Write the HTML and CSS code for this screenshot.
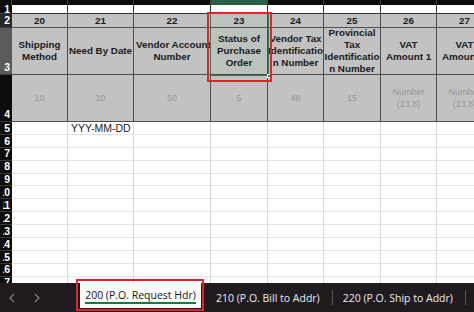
FILE: index.html
```html
<!DOCTYPE html>
<html>
<head>
<meta charset="utf-8">
<link rel="stylesheet" href="styles.css">
</head>
<body>
<div class="app">
  <div class="sheet">
    <!-- column letter strip (cut off) -->
    <div class="c top"></div>
    <div class="c top"></div><div class="c top"></div><div class="c top"></div>
    <div class="c top top-sel"></div>
    <div class="c top"></div><div class="c top"></div><div class="c top"></div><div class="c top"></div>

    <!-- row 1 -->
    <div class="c rh"><div class="rn"><span>1</span></div></div>
    <div class="c w"></div><div class="c w"></div><div class="c w"></div><div class="c w"></div>
    <div class="c w"></div><div class="c w"></div><div class="c w"></div><div class="c w"></div>

    <!-- row 2 -->
    <div class="c rh rh-2"><div class="rn"><span>2</span></div></div>
    <div class="c g num">20</div>
    <div class="c g num">21</div>
    <div class="c g num">22</div>
    <div class="c g num sel">23</div>
    <div class="c g num">24</div>
    <div class="c g num">25</div>
    <div class="c g num">26</div>
    <div class="c g num">27</div>

    <!-- row 3 -->
    <div class="c rh rh-3 tall"><div class="rn"><span>3</span></div></div>
    <div class="c g lab"><span>Shipping</span><span>Method</span></div>
    <div class="c g lab"><span>Need By Date</span></div>
    <div class="c g lab"><span class="start">Vendor Account</span><span>Number</span></div>
    <div class="c g lab sel"><span>Status of</span><span>Purchase</span><span>Order</span></div>
    <div class="c g lab"><span>Vendor Tax</span><span>Identificatio</span><span>n Number</span></div>
    <div class="c g lab"><span>Provincial</span><span>Tax</span><span>Identificatio</span><span>n Number</span></div>
    <div class="c g lab"><span>VAT</span><span>Amount 1</span></div>
    <div class="c g lab"><span>VAT</span><span>Amount 2</span></div>

    <!-- row 4 -->
    <div class="c rh tall"><div class="rn"><span>4</span></div></div>
    <div class="c g val"><span>10</span></div>
    <div class="c g val"><span>10</span></div>
    <div class="c g val"><span>50</span></div>
    <div class="c g val"><span>5</span></div>
    <div class="c g val"><span>48</span></div>
    <div class="c g val"><span>15</span></div>
    <div class="c g val"><span>Number</span><span>(23,8)</span></div>
    <div class="c g val"><span>Number</span><span>(23,8)</span></div>

    <!-- row 5 -->
    <div class="c rh"><div class="rn"><span>5</span></div></div>
    <div class="c e"></div><div class="c e txt">YYY-MM-DD</div><div class="c e"></div><div class="c e"></div>
    <div class="c e"></div><div class="c e"></div><div class="c e"></div><div class="c e"></div>

    <div class="c rh"><div class="rn"><span>6</span></div></div>
    <div class="c e"></div><div class="c e"></div><div class="c e"></div><div class="c e"></div><div class="c e"></div><div class="c e"></div><div class="c e"></div><div class="c e"></div>
    <div class="c rh"><div class="rn"><span>7</span></div></div>
    <div class="c e"></div><div class="c e"></div><div class="c e"></div><div class="c e"></div><div class="c e"></div><div class="c e"></div><div class="c e"></div><div class="c e"></div>
    <div class="c rh"><div class="rn"><span>8</span></div></div>
    <div class="c e"></div><div class="c e"></div><div class="c e"></div><div class="c e"></div><div class="c e"></div><div class="c e"></div><div class="c e"></div><div class="c e"></div>
    <div class="c rh"><div class="rn"><span>9</span></div></div>
    <div class="c e"></div><div class="c e"></div><div class="c e"></div><div class="c e"></div><div class="c e"></div><div class="c e"></div><div class="c e"></div><div class="c e"></div>
    <div class="c rh"><div class="rn"><span>10</span></div></div>
    <div class="c e"></div><div class="c e"></div><div class="c e"></div><div class="c e"></div><div class="c e"></div><div class="c e"></div><div class="c e"></div><div class="c e"></div>
    <div class="c rh"><div class="rn"><span>11</span></div></div>
    <div class="c e"></div><div class="c e"></div><div class="c e"></div><div class="c e"></div><div class="c e"></div><div class="c e"></div><div class="c e"></div><div class="c e"></div>
    <div class="c rh"><div class="rn"><span>12</span></div></div>
    <div class="c e"></div><div class="c e"></div><div class="c e"></div><div class="c e"></div><div class="c e"></div><div class="c e"></div><div class="c e"></div><div class="c e"></div>
    <div class="c rh"><div class="rn"><span>13</span></div></div>
    <div class="c e"></div><div class="c e"></div><div class="c e"></div><div class="c e"></div><div class="c e"></div><div class="c e"></div><div class="c e"></div><div class="c e"></div>
    <div class="c rh"><div class="rn"><span>14</span></div></div>
    <div class="c e"></div><div class="c e"></div><div class="c e"></div><div class="c e"></div><div class="c e"></div><div class="c e"></div><div class="c e"></div><div class="c e"></div>
    <div class="c rh"><div class="rn"><span>15</span></div></div>
    <div class="c e"></div><div class="c e"></div><div class="c e"></div><div class="c e"></div><div class="c e"></div><div class="c e"></div><div class="c e"></div><div class="c e"></div>
    <div class="c rh"><div class="rn"><span>16</span></div></div>
    <div class="c e"></div><div class="c e"></div><div class="c e"></div><div class="c e"></div><div class="c e"></div><div class="c e"></div><div class="c e"></div><div class="c e"></div>
    <div class="c rh"><div class="rn"><span>17</span></div></div>
    <div class="c e"></div><div class="c e"></div><div class="c e"></div><div class="c e"></div><div class="c e"></div><div class="c e"></div><div class="c e"></div><div class="c e"></div>
  </div>

  <div class="tabs">
    <div class="nav">
      <svg class="chev" width="6" height="10" viewBox="0 0 6 10"><path d="M5 1 L1 5 L5 9" fill="none" stroke="#8a8a8a" stroke-width="1.1"/></svg>
      <svg class="chev chev-r" width="6" height="10" viewBox="0 0 6 10"><path d="M1 1 L5 5 L1 9" fill="none" stroke="#8a8a8a" stroke-width="1.1"/></svg>
    </div>
    <div class="tab active"><span>200 (P.O. Request Hdr)</span></div>
    <div class="tab first">210 (P.O. Bill to Addr)</div>
    <div class="sep"></div>
    <div class="tab">220 (P.O. Ship to Addr)</div>
    <div class="sep"></div>
    <div class="tab">230 (P.O. Line)</div>
  </div>
</div>

<div class="selbox"><div class="handle"></div></div>
<div class="mark mark-cell"></div>
<div class="mark mark-tab"></div>
</body>
</html>
```

FILE: styles.css
```css
* { box-sizing: border-box; }

html, body {
  margin: 0;
  padding: 0;
  width: 474px;
  height: 312px;
  overflow: hidden;
  background: #000;
}

body {
  position: relative;
  font-family: "Liberation Sans", Arial, sans-serif;
}

.app {
  display: flex;
  flex-direction: column;
  width: 474px;
  height: 312px;
}

.sheet {
  display: grid;
  grid-template-columns: 12px 56px 66px 77px 57px 56px 57px 56px 56px;
  grid-template-rows: 5px 9px 14px 47px 47px repeat(13, 12.9px);
  height: 283px;
  width: 474px;
  overflow: hidden;
  background: #fff;
  flex: none;
}

.c {
  overflow: hidden;
  border-right: 1px solid #d9d9d9;
  border-bottom: 1px solid #d9d9d9;
  min-width: 0;
}

.top {
  background: #0b0b0b;
  border-right: 1px solid #3e3e3e;
  border-bottom: 0;
}
.top-sel { background: #2b5e46; }

.rh {
  background: #0d0d0d;
  color: #fff;
  border-right: 0;
  border-bottom: 1px solid #3a3a3a;
  display: flex;
  justify-content: flex-end;
  align-items: center;
  padding-right: 2px;
  font-size: 10.5px;
  font-weight: bold;
  line-height: 1;
}
.rn {
  width: 7px;
  overflow: hidden;
  display: flex;
  justify-content: flex-end;
}
.rh span { white-space: nowrap; flex: none; }
.rh.tall { align-items: flex-end; padding-bottom: 2px; }
.rh-2 { background: #262626; }
.rh-3 { background: #5b5b5b; }

.w {
  background: #fff;
  border-right: 1px solid #333;
  border-bottom: 1px solid #333;
}

.g {
  background: #c2c2c2;
  border-right: 1px solid #4e4e4e;
  border-bottom: 1px solid #4e4e4e;
  color: #1a1a1a;
}
.g.sel { background: #bcc3be; }

.num {
  display: flex;
  align-items: center;
  justify-content: center;
  font-size: 9.8px;
  font-weight: bold;
  line-height: 1;
}

.lab {
  display: flex;
  flex-direction: column;
  align-items: center;
  justify-content: center;
  font-size: 9.8px;
  font-weight: bold;
  line-height: 12px;
}
.lab span, .val span { white-space: nowrap; flex: none; }
.lab .start { align-self: flex-start; padding-left: 2px; }

.val {
  display: flex;
  flex-direction: column;
  align-items: center;
  justify-content: center;
  font-size: 9px;
  color: #979797;
  line-height: 12px;
}

.e {
  background: #fff;
  border-right: 1px solid #dadada;
  border-bottom: 1px solid #e4e4e4;
}

.txt {
  font-size: 10.5px;
  color: #1c1c1c;
  padding-left: 3px;
  line-height: 12px;
  white-space: nowrap;
  overflow: visible;
}

/* sheet tabs */
.tabs {
  flex: 1;
  display: flex;
  align-items: center;
  background: #1f1b1f;
  font-family: "Open Sans", "Noto Sans", sans-serif;
  font-size: 10.5px;
  color: #ececec;
  white-space: nowrap;
  overflow: hidden;
}

.nav {
  width: 80px;
  flex: none;
  display: flex;
  align-items: center;
  padding-left: 9px;
}
.chev { display: block; }
.chev-r { margin-left: 19px; }

.tab { flex: none; padding: 0 12px 0 10px; }
.tab.first { padding-left: 15px; }

.tab.active {
  align-self: flex-start;
  width: 121px;
  height: 25px;
  padding: 0;
  background: #fafafa;
  color: #1b1b1b;
  display: flex;
  align-items: center;
  justify-content: center;
}
.tab.active span {
  border-bottom: 2px solid #107c41;
  line-height: 13px;
  padding-top: 2px;
}

.sep {
  flex: none;
  width: 1px;
  height: 15px;
  background: #555;
}

/* overlays */
.selbox {
  position: absolute;
  left: 210px;
  top: 13px;
  width: 59px;
  height: 63px;
  border: 1px solid #2f7a52;
}
.handle {
  position: absolute;
  right: -3px;
  bottom: -3px;
  width: 4px;
  height: 4px;
  background: #2f7a52;
  border: 1px solid #fff;
}

.mark {
  position: absolute;
  border: 2.5px solid #e2232b;
}
.mark-cell { left: 207px; top: 12px; width: 65px; height: 70px; }
.mark-tab { left: 76px; top: 279px; width: 128px; height: 32px; }
```
